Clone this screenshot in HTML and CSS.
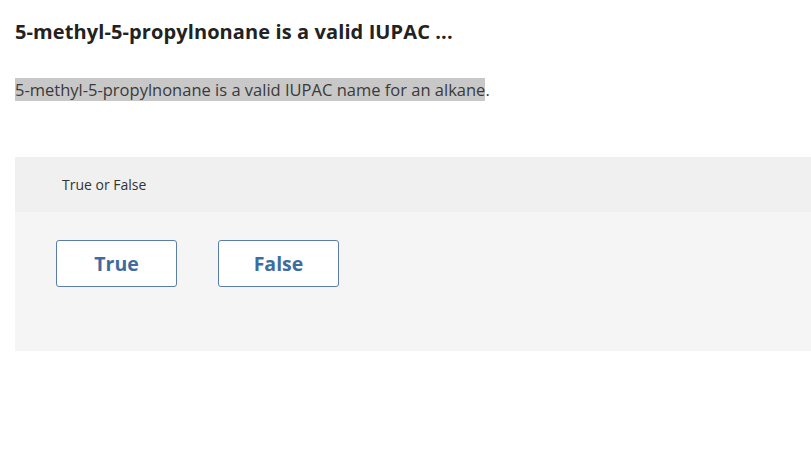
FILE: index.html
```html
<!DOCTYPE html>
<html lang="en">

<head>
    <meta charset="UTF-8">
    <title>True or False</title>
    <link rel="stylesheet" href="styles.css">
</head>

<body>

    <h1 class="title">5-methyl-5-propylnonane is a valid IUPAC ...</h1>

    <p class="prompt"><span class="selected">5-methyl-5-propylnonane is a valid IUPAC name for an alkane</span>.</p>

    <div class="question">
        <div class="question-head">True or False</div>
        <div class="question-body">
            <button class="choice">True</button>
            <button class="choice">False</button>
        </div>
    </div>

</body>

</html>
```

FILE: styles.css
```css
body {
    margin: 0;
    padding: 0 0 0 15px;
    font-family: "Open Sans", sans-serif;
    color: #333;
    background: #fff;
}

.title {
    margin: 0;
    padding-top: 18px;
    font-size: 20px;
    line-height: 27px;
    font-weight: 700;
    color: #222;
    letter-spacing: 0.1px;
}

.prompt {
    margin: 34px 0 0;
    font-size: 16.5px;
    line-height: 22px;
    color: #3a3a3a;
}

.selected {
    background: #c8c8c8;
}

.question {
    margin-top: 56px;
    background: #f5f5f5;
}

.question-head {
    height: 55px;
    padding-left: 47px;
    display: flex;
    align-items: center;
    background: #f0f0f0;
    font-size: 14px;
    color: #333;
}

.question-body {
    height: 139px;
    padding: 28px 0 0 41px;
    box-sizing: border-box;
    display: flex;
    align-items: flex-start;
    gap: 41px;
}

.choice {
    width: 121px;
    height: 47px;
    padding: 0;
    background: #fff;
    border: 1px solid #5a7ea6;
    border-radius: 3px;
    font-family: "Open Sans", sans-serif;
    font-size: 19.5px;
    font-weight: 700;
    color: #3f6c9e;
}
```
